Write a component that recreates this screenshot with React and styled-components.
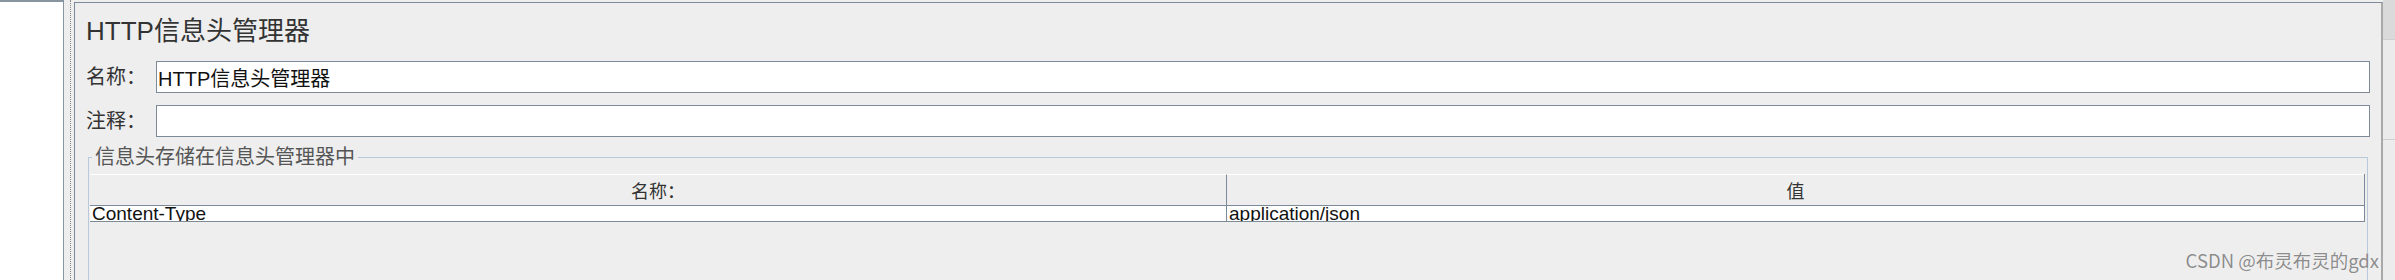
import styled, { createGlobalStyle } from "styled-components";

const GlobalStyle = createGlobalStyle`
  html, body {
    margin: 0;
    padding: 0;
    background: #eeeeee;
    overflow: hidden;
  }
  * {
    box-sizing: border-box;
  }
`;

const FONT = `"Liberation Sans", "Noto Sans CJK SC", sans-serif`;
const EDGE = "#7d8b98";

const Frame = styled.div`
  position: relative;
  display: flex;
  width: 2395px;
  height: 280px;
  overflow: hidden;
  font-family: ${FONT};
`;

const TreePanel = styled.div`
  width: 64px;
  background: #ffffff;
  border-top: 2px solid #8795a1;
  border-right: 1px solid #8795a1;
`;

const Splitter = styled.div`
  width: 10px;
  display: flex;
  background: #eeeeee;
  &::after {
    content: "";
    margin-left: 6px;
    border-left: 1px dotted #8a8a8a;
  }
`;

const Main = styled.div`
  flex: 1;
  display: flex;
  flex-direction: column;
  margin-top: 2px;
  padding: 13px 11px 0 11px;
  background: #eeeeee;
  border-top: 1px solid ${EDGE};
  border-left: 1px solid ${EDGE};
  border-right: 2px solid #a9a9a9;
  overflow: hidden;
`;

const Title = styled.h1`
  margin: 0;
  height: 30px;
  font-size: 26px;
  line-height: 30px;
  font-weight: normal;
  color: #333333;
  white-space: nowrap;
`;

const FieldRow = styled.div`
  display: flex;
  align-items: center;
  margin-top: ${(p) => p.$gap}px;
`;

const Label = styled.label`
  width: 70px;
  font-size: 20px;
  line-height: 20px;
  color: #333333;
`;

const TextBox = styled.input`
  flex: 1;
  height: 32px;
  padding: 0 1px;
  border: 1px solid ${EDGE};
  background: #ffffff;
  font-family: ${FONT};
  font-size: 20px;
  color: #111111;
  outline: none;
`;

const Group = styled.fieldset`
  flex: 1;
  margin: 10px 2px -20px 2px;
  padding: 0 2px 0 1px;
  border: 1px solid #b9c9da;
  min-width: 0;
`;

const Legend = styled.legend`
  margin-left: 2px;
  padding: 0 3px;
  font-size: 20px;
  line-height: 20px;
  color: #555555;
`;

const Table = styled.div`
  display: grid;
  grid-template-columns: 1fr 1fr;
  margin-top: 7px;
  border-right: 1px solid ${EDGE};
`;

const HeadCell = styled.div`
  height: 32px;
  display: flex;
  align-items: center;
  justify-content: center;
  border-top: 1px solid #ffffff;
  border-bottom: 1px solid ${EDGE};
  border-right: ${(p) => (p.$first ? `1px solid ${EDGE}` : "none")};
  font-size: 18px;
  color: #333333;
`;

const BodyCell = styled.div`
  height: 16px;
  padding-left: 2px;
  background: #ffffff;
  border-bottom: 1px solid ${EDGE};
  border-right: ${(p) => (p.$first ? `1px solid ${EDGE}` : "none")};
  font-size: 19px;
  line-height: 15px;
  color: #111111;
  white-space: nowrap;
  overflow: hidden;
`;

const Gutter = styled.div`
  width: 12px;
  display: flex;
  flex-direction: column;
  background: #ececec;
`;

const GutterBlock = styled.div`
  height: ${(p) => p.$h}px;
  background: ${(p) => p.$bg};
  border-bottom: 1px solid #cfcfcf;
`;

const Watermark = styled.div`
  position: absolute;
  right: 16px;
  top: 250px;
  font-family: "Noto Sans CJK SC", sans-serif;
  font-size: 18.5px;
  line-height: 20px;
  color: #8c8c8c;
  text-shadow: 0 0 1px #ffffff;
  white-space: nowrap;
`;

const headers = [
  { name: "Content-Type", value: "application/json" },
];

export default function App() {
  return (
    <>
      <GlobalStyle />
      <Frame>
        <TreePanel />
        <Splitter />
        <Main>
          <Title>HTTP信息头管理器</Title>
          <FieldRow $gap={15}>
            <Label>名称：</Label>
            <TextBox defaultValue="HTTP信息头管理器" />
          </FieldRow>
          <FieldRow $gap={12}>
            <Label>注释：</Label>
            <TextBox defaultValue="" />
          </FieldRow>
          <Group>
            <Legend>信息头存储在信息头管理器中</Legend>
            <Table>
              <HeadCell $first>名称：</HeadCell>
              <HeadCell>值</HeadCell>
              {headers.map((h) => (
                <>
                  <BodyCell $first key={h.name + "-n"}>{h.name}</BodyCell>
                  <BodyCell key={h.name + "-v"}>{h.value}</BodyCell>
                </>
              ))}
            </Table>
          </Group>
        </Main>
        <Gutter>
          <GutterBlock $h={40} $bg="#dadada" />
          <GutterBlock $h={100} $bg="#ebebeb" />
        </Gutter>
        <Watermark>CSDN @布灵布灵的gdx</Watermark>
      </Frame>
    </>
  );
}
